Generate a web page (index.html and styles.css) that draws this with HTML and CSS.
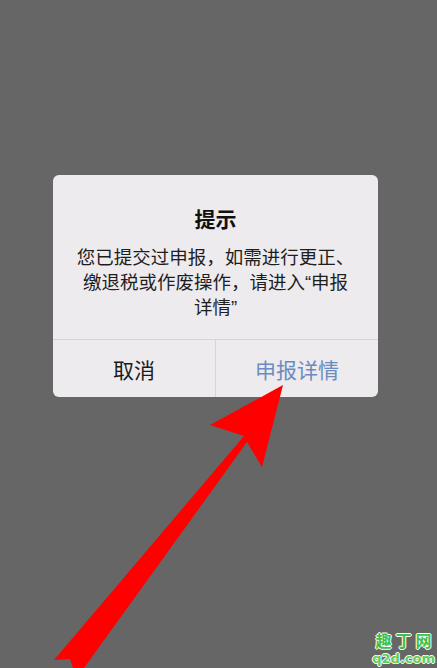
FILE: index.html
```html
<!DOCTYPE html>
<html lang="zh-CN">
<head>
<meta charset="utf-8">
<title>提示</title>
<link rel="stylesheet" href="styles.css">
</head>
<body>
<div class="screen">
  <div class="dialog">
    <div class="dialog-body">
      <div class="dialog-title">提示</div>
      <div class="dialog-message">您已提交过申报，如需进行更正、<br>缴退税或作废操作，请进入<span class="quote">“</span>申报<br>详情<span class="quote">”</span></div>
    </div>
    <div class="dialog-actions">
      <div class="action action-cancel">取消</div>
      <div class="action action-primary">申报详情</div>
    </div>
  </div>
  <svg class="arrow" width="437" height="668" viewBox="0 0 437 668" xmlns="http://www.w3.org/2000/svg">
    <polygon points="283,385 262,467 247,442 84,668 73,668 70,659 54,660 244,436 210,425" fill="#ff0000"/>
  </svg>
  <div class="watermark">
    <div class="wm-name">趣丁网</div>
    <div class="wm-url">q2d.com</div>
  </div>
</div>
</body>
</html>
```
FILE: styles.css
```css
html, body {
  margin: 0;
  padding: 0;
}
body {
  background: #666666;
  font-family: "Noto Sans CJK SC", "Noto Sans", sans-serif;
}
.screen {
  position: relative;
  width: 437px;
  height: 668px;
  overflow: hidden;
  background: #666666;
  padding: 175px 0 0 53px;
  box-sizing: border-box;
}
.dialog {
  width: 325px;
  background: #edebee;
  border-radius: 6px;
  overflow: hidden;
}
.dialog-body {
  padding: 29px 10px 20px;
  display: flex;
  flex-direction: column;
  align-items: center;
  gap: 12px;
}
.dialog-title {
  font-size: 21px;
  font-weight: 700;
  line-height: 28px;
  color: #111111;
}
.dialog-message {
  font-size: 18.5px;
  line-height: 25px;
  color: #1e1e1e;
  text-align: center;
}
.quote {
  font-family: "Liberation Sans", sans-serif;
  line-height: 1;
}
.dialog-actions {
  display: flex;
  border-top: 1px solid #d6d4d7;
  height: 57px;
}
.action {
  flex: 1;
  display: flex;
  align-items: center;
  justify-content: center;
  font-size: 21px;
}
.action-cancel {
  color: #1a1a1a;
  border-right: 1px solid #d6d4d7;
}
.action-primary {
  color: #6b8cc0;
}
.arrow {
  position: absolute;
  left: 0;
  top: 0;
}
.watermark {
  position: absolute;
  right: 2px;
  bottom: 2px;
  display: flex;
  flex-direction: column;
  align-items: center;
  gap: 2px;
}
.wm-name {
  font-size: 16px;
  line-height: 17px;
  letter-spacing: 4px;
  margin-right: -4px;
  font-weight: 700;
  color: #3fbf4a;
  text-shadow: -1px 0 #fff, 1px 0 #fff, 0 -1px #fff, 0 1px #fff;
}
.wm-url {
  font-family: "DejaVu Sans", sans-serif;
  font-size: 13px;
  line-height: 15px;
  font-weight: 700;
  color: #5ccf5c;
  text-shadow: -1px 0 #fff, 1px 0 #fff, 0 -1px #fff, 0 1px #fff;
}
```
